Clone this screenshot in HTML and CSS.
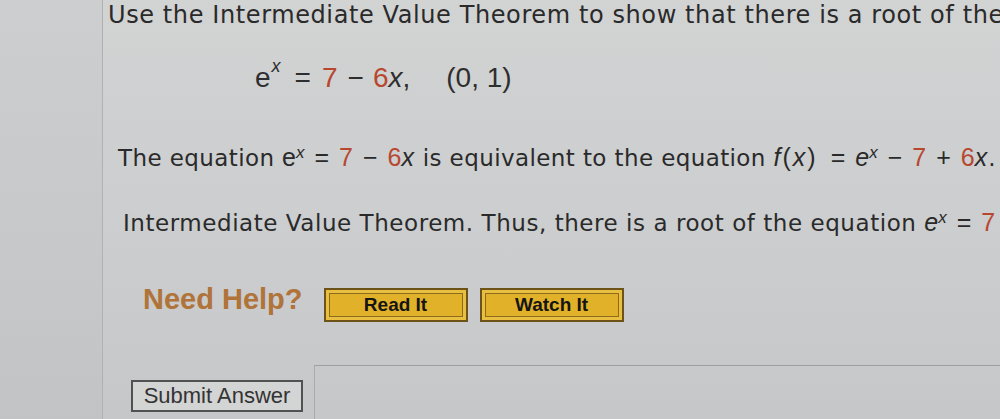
FILE: index.html
```html
<!DOCTYPE html>
<html>
<head>
<meta charset="utf-8">
<link rel="stylesheet" href="styles.css">
</head>
<body>
<div class="page">
  <div class="gutter"></div>
  <div class="content">
    <p class="intro">Use the Intermediate Value Theorem to show that there is a root of the given equation in the specified interval.</p>
    <div class="equation">
      <span class="base">e<sup><i>x</i></sup></span><span class="op">=</span><span class="red">7</span><span class="op op2">−</span><span><span class="red">6</span><i>x</i>,</span><span class="interval">(0, 1)</span>
    </div>
    <p class="text line2">The equation <span class="math">e<sup><i>x</i></sup><span class="op">=</span><span class="red">7</span><span class="op">−</span><span class="red">6</span><i>x</i></span> is equivalent to the equation <span class="math"><span class="fx"><i>f</i>(<i>x</i>)</span><span class="op">=</span><i>e</i><sup><i>x</i></sup><span class="op">−</span><span class="red">7</span><span class="op">+</span><span class="red">6</span><i>x</i></span>.</p>
    <p class="text line3">Intermediate Value Theorem. Thus, there is a root of the equation <span class="math"><i>e</i><sup><i>x</i></sup><span class="op">=</span><span class="red">7</span><span class="op">−</span><span class="red">6</span><i>x</i></span> in the interval.</p>
    <div class="help">
      <span class="need">Need Help?</span>
      <button class="gold">Read It</button>
      <button class="gold">Watch It</button>
    </div>
    <div class="submit-row">
      <button class="submit">Submit Answer</button>
      <div class="panel"></div>
    </div>
  </div>
</div>
</body>
</html>
```
FILE: styles.css
```css
html, body {
  margin: 0;
  padding: 0;
}
body {
  width: 1000px;
  height: 419px;
  overflow: hidden;
  background: linear-gradient(180deg, #d2d3d3 0%, #cccecf 50%, #c5c7c8 100%);
  font-family: "DejaVu Sans", Verdana, sans-serif;
  color: #2a2a2a;
}
.page {
  display: flex;
  height: 419px;
}
.gutter {
  width: 102px;
  flex: none;
  border-right: 1px solid #aeb2b4;
  background: rgba(150, 155, 160, 0.08);
}
.content {
  flex: 1;
  min-width: 0;
  overflow: hidden;
}
.intro {
  margin: 0 0 0 5px;
  white-space: nowrap;
  font-size: 24px;
  line-height: 30px;
  letter-spacing: 0.6px;
}
.text {
  margin: 0;
  white-space: nowrap;
  font-size: 23px;
  line-height: 30px;
  letter-spacing: 0.4px;
}
.equation {
  margin: 28px 0 0 152px;
  height: 40px;
  line-height: 40px;
  display: flex;
  align-items: baseline;
  font-family: "Liberation Sans", Arial, sans-serif;
  font-size: 28px;
  color: #2e2e2e;
  white-space: nowrap;
}
.equation sup {
  font-size: 18px;
  vertical-align: 15px;
  margin: 0 4px 0 1px;
}
.equation .op {
  margin: 0 11px 0 10px;
}
.equation .op2 {
  margin-right: 9px;
}
.equation .interval {
  margin-left: 36px;
}
sup {
  font-size: 0.68em;
  line-height: 0;
  vertical-align: 0.5em;
}
.math {
  font-family: "Liberation Sans", Arial, sans-serif;
  font-size: 25px;
  line-height: 1;
  letter-spacing: 0;
  margin: 0 1px 0 0;
}
.math .op {
  margin: 0 10px;
}
.fx {
  letter-spacing: 2px;
  margin-right: 3px;
}
.red {
  color: #b8472f;
}
.line2 {
  margin-top: 45px;
  margin-left: 15px;
}
.line3 {
  margin-top: 35px;
  margin-left: 20px;
  letter-spacing: 0.55px;
}
.help {
  display: flex;
  align-items: center;
  margin: 45px 0 0 40px;
}
.need {
  font-family: "Liberation Sans", Arial, sans-serif;
  font-weight: bold;
  font-size: 29px;
  color: #b0733a;
  margin: 0 21px 10px 0;
}
.gold {
  width: 144px;
  height: 34px;
  margin-right: 12px;
  padding: 0;
  background: #e2b12a;
  border: 2px solid #6e5318;
  box-shadow: inset 0 0 0 3px #e8bf3e, inset 0 0 0 4px #8c6a1e;
  font-family: "Liberation Sans", Arial, sans-serif;
  font-weight: bold;
  font-size: 19px;
  color: #151515;
}
.submit-row {
  display: flex;
  align-items: flex-start;
  margin: 39px 0 0 28px;
}
.submit {
  width: 172px;
  height: 32px;
  margin-top: 15px;
  padding: 0;
  background: #d3d4d4;
  border: 2px solid #4f5152;
  font-family: "Liberation Sans", Arial, sans-serif;
  font-size: 22px;
  color: #333;
}
.panel {
  flex: 1;
  margin-left: 11px;
  height: 60px;
  border-top: 1px solid #9da0a2;
  border-left: 1px solid #a8abad;
}
```
